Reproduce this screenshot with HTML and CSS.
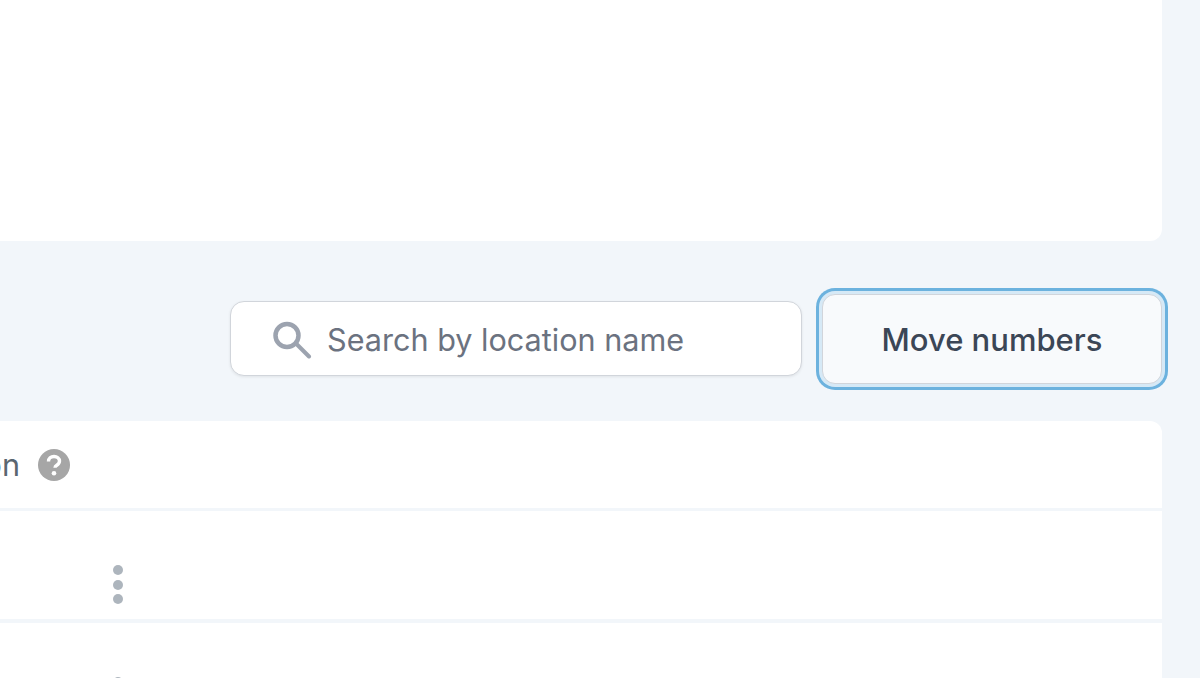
FILE: index.html
```html
<!DOCTYPE html>
<html lang="en">
<head>
  <meta charset="UTF-8">
  <meta name="viewport" content="width=device-width, initial-scale=1.0">
  <title>Locations</title>
  <link rel="stylesheet" href="styles.css">
</head>
<body>
  <div class="page">
    <div class="top-card"></div>

    <div class="toolbar">
      <div class="search">
        <svg class="search-icon" width="40" height="40" viewBox="0 0 40 40" fill="none">
          <circle cx="15" cy="16.500" r="11.500" stroke="#9ca3af" stroke-width="4.500"/>
          <path d="M24.500 25L37 37.500" stroke="#9ca3af" stroke-width="4" stroke-linecap="round"/>
        </svg>
        <input class="search-input" type="text" placeholder="Search by location name">
      </div>
      <button class="move-button">Move numbers</button>
    </div>

    <div class="table">
      <div class="table-head">
        <span class="head-label"><span>Location</span></span>
        <svg class="help-icon" width="32" height="32" viewBox="0 0 32 32">
          <circle cx="16" cy="16" r="16" fill="#a6a6a6"/>
          <path d="M10.500 12.500c0-3 2.400-5 5.500-5s5.500 1.900 5.500 4.600c0 2-1.100 3.100-2.700 4.100-1.300.8-1.800 1.300-1.800 2.600" fill="none" stroke="#fff" stroke-width="3.400"/>
          <circle cx="16" cy="24.300" r="2.300" fill="#fff"/>
        </svg>
      </div>
      <div class="table-row">
        <span class="dots"><i></i><i></i><i></i></span>
      </div>
      <div class="table-row">
        <span class="dots"><i></i><i></i><i></i></span>
      </div>
    </div>
  </div>
</body>
</html>
```

FILE: styles.css
```css
* {
  margin: 0;
  padding: 0;
  box-sizing: border-box;
  font-family: Inter, "Noto Sans", sans-serif;
}
html, body {
  height: 100%;
  overflow: hidden;
}
body {
  background-color: #f2f6fa;
}
.page {
  width: 1162px;
}
.top-card {
  height: 241px;
  background-color: #ffffff;
  border-bottom-right-radius: 12px;
}
.toolbar {
  display: flex;
  justify-content: flex-end;
  align-items: center;
  gap: 20px;
  margin-top: 48px;
  height: 100px;
}
.search {
  width: 572px;
  height: 75px;
  margin-bottom: 2px;
  display: flex;
  align-items: center;
  gap: 15px;
  padding-left: 41px;
  padding-top: 2px;
  background-color: #ffffff;
  border: 1px solid #d1d5db;
  border-radius: 14px;
  box-shadow: 0 1px 3px rgba(0, 0, 0, 0.08);
}
.search-icon {
  flex: none;
}
.search-input {
  flex: 1;
  border: none;
  outline: none;
  background: none;
  font-size: 30.6px;
  color: #374151;
}
.search-input::placeholder {
  color: #6b7280;
  opacity: 1;
}
.move-button {
  width: 340px;
  height: 90px;
  background-color: #f8fafc;
  border: 1px solid #d1d5db;
  border-radius: 13px;
  box-shadow: 0 0 0 3px #d6e9f6, 0 0 0 6px #6cb2de;
  font-size: 31px;
  font-weight: 500;
  color: #3b4656;
}
.table {
  margin-top: 32px;
  background-color: #ffffff;
  border-top-right-radius: 12px;
}
.table-head {
  height: 90px;
  display: flex;
  align-items: center;
  gap: 18px;
  border-bottom: 3px solid #f2f6fa;
}
.head-label {
  width: 20px;
  display: flex;
  justify-content: flex-end;
  overflow: hidden;
  font-size: 30.6px;
  color: #5b6670;
}
.table-row {
  height: 112px;
  padding: 54px 0 0 113px;
  border-bottom: 4px solid #f2f6fa;
}
.dots {
  display: flex;
  flex-direction: column;
  gap: 4.500px;
}
.dots i {
  display: block;
  width: 10px;
  height: 10px;
  border-radius: 50%;
  background-color: #adb5bd;
}
```
